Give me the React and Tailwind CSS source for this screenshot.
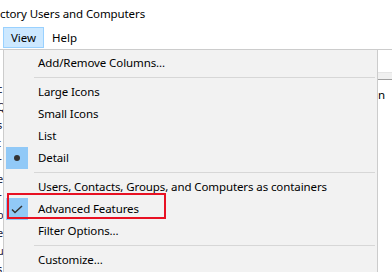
const font = { fontFamily: '"Noto Sans", "Segoe UI", sans-serif' };

function Item({ label, mark }) {
  return (
    <div className="flex h-[22px] items-center">
      <div className="ml-[2px] mr-[10px] flex h-[22px] w-[22px] items-center justify-center">
        {mark === 'dot' ? (
          <div className="flex h-[22px] w-[22px] items-center justify-center bg-[#91c9f7]">
            <div className="h-[6px] w-[6px] rounded-full bg-[#333333]" />
          </div>
        ) : null}
        {mark === 'check' ? (
          <div className="flex h-[22px] w-[22px] items-center justify-center bg-[#91c9f7]">
            <svg width="12" height="9" viewBox="0 0 12 9" fill="none">
              <path d="M1 4.5 L4 7.5 L11 1" stroke="#333333" strokeWidth="1.5" />
            </svg>
          </div>
        ) : null}
      </div>
      <span className="whitespace-nowrap text-[11.5px] leading-[22px] tracking-[-0.1px] text-black">{label}</span>
    </div>
  );
}

function Sep() {
  return (
    <div className="flex h-[7px] items-center pl-[30px] pr-[2px]">
      <div className="h-px w-full bg-[#d7d7d7]" />
    </div>
  );
}

const behind = ['c', 'Q', 's', 't', 'r', 'e', 'r', 'o', 'e', 'u', 's'];

export default function App() {
  return (
    <div className="relative h-[272px] w-[392px] overflow-hidden bg-white" style={font}>
      <div className="h-[27px] whitespace-nowrap pt-[6px] text-[11.5px] leading-[16px] tracking-[-0.1px] text-black">
        ctory Users and Computers
      </div>
      <div className="flex h-[22px] items-start text-[11.5px] text-black">
        <div className="ml-[3px] flex h-[21px] w-[41px] items-center justify-center border border-[#99d1ff] bg-[#cce8ff]">
          View
        </div>
        <div className="ml-[8px] flex h-[21px] items-center">Help</div>
      </div>
      <div className="flex h-[223px] border-t border-[#cccccc]">
        <div className="w-[3px] overflow-hidden pt-[30px]">
          {behind.map((c, i) => (
            <div key={i} className="-ml-[3px] h-[18px] text-[11px] leading-[18px] text-[#1a1a3a]">
              {c}
            </div>
          ))}
        </div>
        <div className="w-[375px] border-x border-[#cccccc] bg-[#f2f2f2] pt-[2px]">
          <Item label="Add/Remove Columns..." />
          <Sep />
          <Item label="Large Icons" />
          <Item label="Small Icons" />
          <Item label="List" />
          <Item label="Detail" mark="dot" />
          <Sep />
          <Item label="Users, Contacts, Groups, and Computers as containers" />
          <Item label="Advanced Features" mark="check" />
          <Item label="Filter Options..." />
          <Sep />
          <Item label="Customize..." />
        </div>
        <div className="flex-1 overflow-hidden">
          <div className="mt-[22px] h-[8px] border-y border-t-[#e5e5e5] border-b-[#a0a0a0] bg-[#f0f0f0]" />
          <div className="mt-[8px] text-[11.5px] leading-[14px] text-black">n</div>
        </div>
      </div>
      <div className="absolute left-[7px] top-[193px] h-[26px] w-[159px] border-2 border-[#e81123]" />
    </div>
  );
}
